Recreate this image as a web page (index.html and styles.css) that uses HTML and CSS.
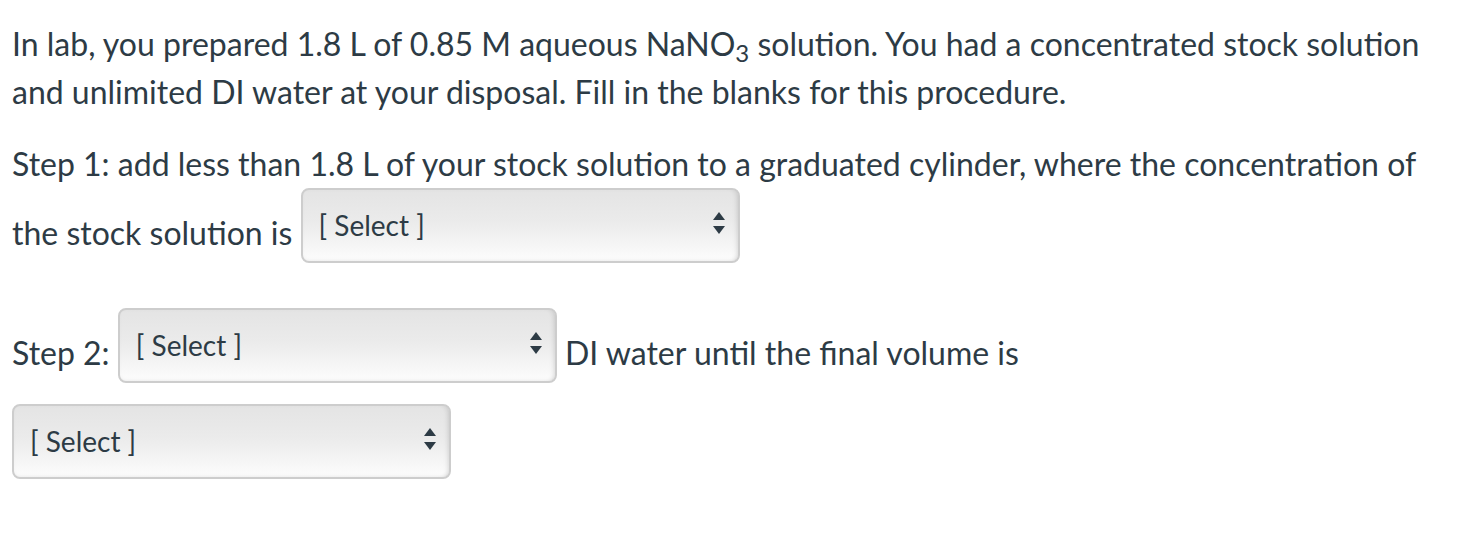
FILE: index.html
```html
<!DOCTYPE html>
<html lang="en">
<head>
<meta charset="utf-8">
<title>Question</title>
<link rel="stylesheet" href="styles.css">
</head>
<body>
<div class="question">
  <p class="para">In lab, you prepared 1.8 L of 0.85 M aqueous NaNO<sub class="sub">3</sub> solution. You had a concentrated stock solution and unlimited DI water at your disposal. Fill in the blanks for this procedure.</p>
  <p class="para">Step 1: add less than 1.8 L of your stock solution to a graduated cylinder, where the concentration of the stock solution is <span class="select"><span class="select-text">[ Select ]</span><svg class="arrows" width="12" height="24" viewBox="0 0 12 24"><path d="M6 0 L12 8 L0 8 Z M0 14 L12 14 L6 22 Z" fill="#2d3b45"/></svg></span></p>
  <p class="para">Step 2: <span class="select"><span class="select-text">[ Select ]</span><svg class="arrows" width="12" height="24" viewBox="0 0 12 24"><path d="M6 0 L12 8 L0 8 Z M0 14 L12 14 L6 22 Z" fill="#2d3b45"/></svg></span> DI water until the final volume is <span class="select"><span class="select-text">[ Select ]</span><svg class="arrows" width="12" height="24" viewBox="0 0 12 24"><path d="M6 0 L12 8 L0 8 Z M0 14 L12 14 L6 22 Z" fill="#2d3b45"/></svg></span></p>
</div>
</body>
</html>
```
FILE: styles.css
```css
html, body {
  margin: 0;
  padding: 0;
  background: #ffffff;
}
body {
  font-family: Lato, "Open Sans", "Liberation Sans", sans-serif;
  color: #2d3b45;
  font-size: 32px;
  line-height: 48px;
}
.question {
  padding: 20px 0 0 12px;
}
.para {
  margin: 0 0 24px 0;
}
.sub {
  font-size: 0.75em;
  line-height: 0;
  vertical-align: -0.25em;
}
.select {
  display: inline-block;
  box-sizing: border-box;
  width: 439px;
  height: 75px;
  margin-bottom: 21px;
  vertical-align: -39px;
  overflow: hidden;
  border: 2px solid #cdcdcd;
  border-radius: 8px;
  background: linear-gradient(to bottom, #e4e4e4 0%, #ebebeb 45%, #f6f6f6 80%, #fdfdfd 100%);
  box-shadow: inset -4px 0 5px -3px rgba(0,0,0,0.12), inset 0 -2px 4px -2px rgba(0,0,0,0.08);
  position: relative;
}
.select-text {
  display: block;
  padding-left: 16px;
  line-height: 70px;
  font-size: 28px;
  white-space: nowrap;
}
.arrows {
  position: absolute;
  right: 13px;
  top: 22px;
}
```
